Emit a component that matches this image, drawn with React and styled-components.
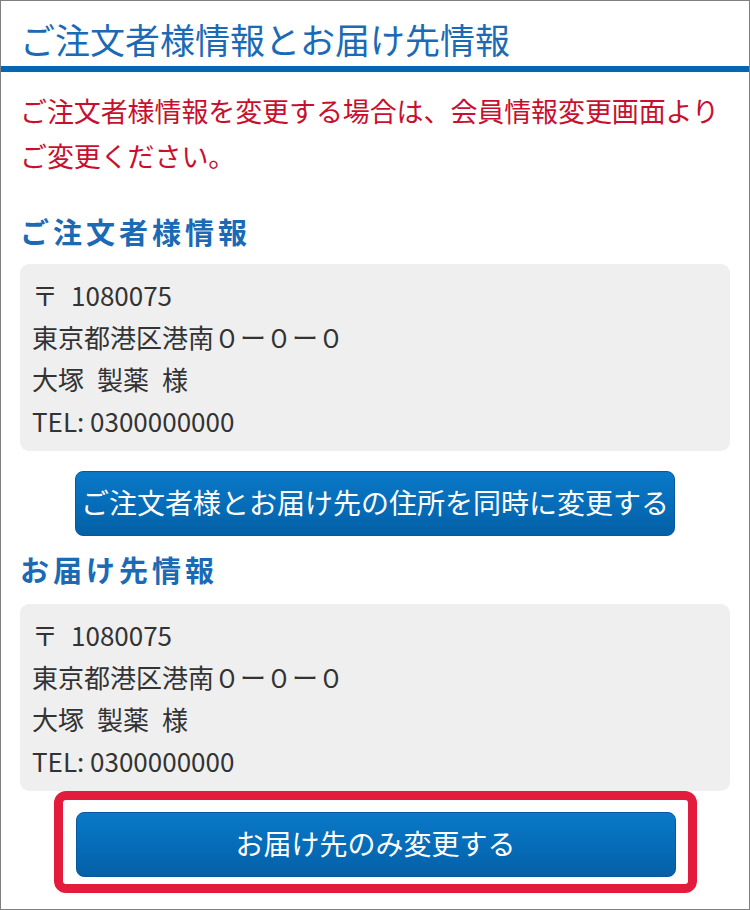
import styled, { createGlobalStyle } from 'styled-components';

const GlobalStyle = createGlobalStyle`
	body {
		margin: 0;
		background: #fff;
		font-family: 'Noto Sans CJK JP', 'Noto Sans', sans-serif;
	}
`;

const Frame = styled.div`
	width: 750px;
	height: 910px;
	box-sizing: border-box;
	border: 1px solid #7f7f7f;
	background: #fff;
	overflow: hidden;
`;

const Header = styled.div`
	height: 71px;
	box-sizing: border-box;
	padding: 10px 19px 0;
	border-bottom: 6px solid #0566b2;
	display: flex;
	align-items: center;
`;

const Title = styled.h1`
	margin: 0;
	font-size: 35px;
	font-weight: 400;
	line-height: 1;
	color: #1a6ab5;
`;

const Content = styled.div`
	padding: 0 19px;
	display: flex;
	flex-direction: column;
`;

const Notice = styled.p`
	margin: 16px 0 0;
	font-size: 27px;
	line-height: 45px;
	letter-spacing: -0.1px;
	color: #c8102e;
	white-space: nowrap;
`;

const Heading = styled.h2`
	margin: ${({ $top }) => $top}px 0 ${({ $bottom }) => $bottom}px;
	font-size: 29px;
	font-weight: 700;
	line-height: 40px;
	letter-spacing: 4px;
	color: #1a6ab5;
`;

const AddressBox = styled.div`
	padding: 10px 12px 9px;
	border-radius: 9px;
	background: #efefef;
	color: #333;
	font-size: 26px;
	line-height: 42px;
`;

const AddressLine = styled.div`
	white-space: nowrap;
`;

const Button = styled.button`
	display: block;
	width: 600px;
	height: 65px;
	margin: ${({ $top }) => $top}px auto 0;
	padding: 0 0 3px;
	border: 1px solid #0558a0;
	border-radius: 8px;
	background: linear-gradient(to bottom, #0a79c7 0%, #066db9 50%, #0560a6 100%);
	color: #fff;
	font-family: inherit;
	font-size: 28px;
	line-height: 1;
	white-space: nowrap;
	cursor: pointer;
`;

const Highlight = styled.div`
	align-self: center;
	width: 643px;
	box-sizing: border-box;
	padding: 12px 12px 7px 13px;
	border: 9px solid #e31b3c;
	border-radius: 12px;

	${Button} {
		margin: 0;
	}
`;

const Address = () => (
	<AddressBox>
		<AddressLine>〒{'\u2002'}1080075</AddressLine>
		<AddressLine>東京都港区港南０ー０ー０</AddressLine>
		<AddressLine>大塚{'\u2002'}製薬{'\u2002'}様</AddressLine>
		<AddressLine>TEL: 0300000000</AddressLine>
	</AddressBox>
);

export default function App() {
	return (
		<>
			<GlobalStyle />
			<Frame>
				<Header>
					<Title>ご注文者様情報とお届け先情報</Title>
				</Header>
				<Content>
					<Notice>
						ご注文者様情報を変更する場合は、会員情報変更画面より
						<br />
						ご変更ください。
					</Notice>
					<Heading $top={33} $bottom={13}>ご注文者様情報</Heading>
					<Address />
					<Button $top={20}>ご注文者様とお届け先の住所を同時に変更する</Button>
					<Heading $top={13} $bottom={15}>お届け先情報</Heading>
					<Address />
					<Highlight>
						<Button>お届け先のみ変更する</Button>
					</Highlight>
				</Content>
			</Frame>
		</>
	);
}
